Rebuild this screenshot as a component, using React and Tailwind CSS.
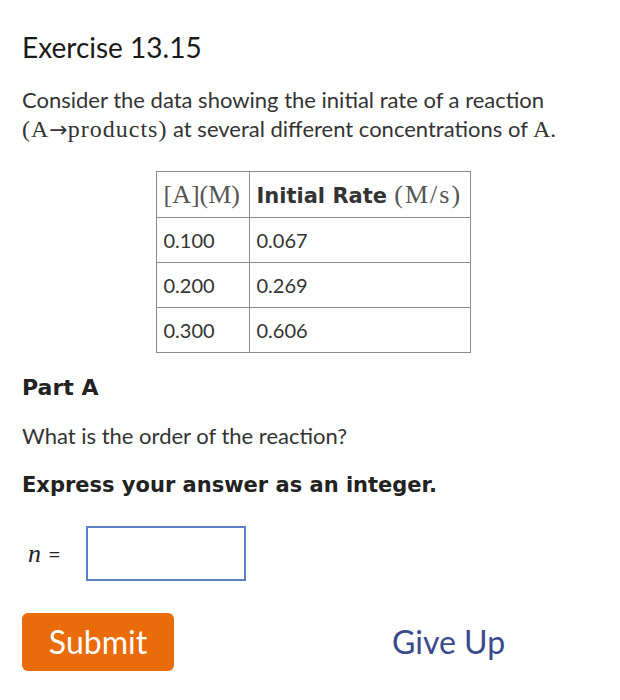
import React from 'react'

// ── Data ──────────────────────────────────────────────────────────────────────

const rows = [
  ['0.100', '0.067'],
  ['0.200', '0.269'],
  ['0.300', '0.606'],
]

const sans  = "font-['Lato','Open_Sans',sans-serif]"
const bold  = "font-['DejaVu_Sans','Open_Sans',sans-serif] font-bold"
const serif = "font-['Liberation_Serif','DejaVu_Serif',serif]"

// ── Page ──────────────────────────────────────────────────────────────────────

export default function App() {
  return (
    <div className={`${sans} bg-white min-h-[700px] w-[620px] px-[22px] pt-[31px] text-[#333]`}>
      <h1 className="text-[28px] leading-[32px] text-[#1a1a1a]">Exercise 13.15</h1>

      <p className="mt-[22px] text-[22px] leading-[29px]">
        Consider the data showing the initial rate of a reaction
        <br />
        <span className={`${serif} text-[24px] tracking-[1px]`}>
          (A<span className="font-['DejaVu_Sans',sans-serif] text-[22px] tracking-normal">→</span>products)
        </span>{' '}
        at several different concentrations of{' '}
        <span className={`${serif} text-[24px]`}>A</span>.
      </p>

      <div className="mt-[27px] flex justify-center pl-[6px]">
        <table className="border-collapse text-[20px]">
          <thead>
            <tr className="h-[46px]">
              <th className={`${serif} w-[93px] border border-[#8c8c8c] px-[7px] text-left text-[26px] font-normal text-[#555]`}>
                [A](M)
              </th>
              <th className={`${bold} w-[221px] border border-[#8c8c8c] px-[7px] text-left text-[21px] text-[#333]`}>
                Initial Rate{' '}
                <span className={`${serif} text-[26px] font-normal tracking-[2px] text-[#555]`}>(M/s)</span>
              </th>
            </tr>
          </thead>
          <tbody>
            {rows.map(([a, r]) => (
              <tr key={a} className="h-[45px]">
                <td className="border border-[#8c8c8c] px-[7px]">{a}</td>
                <td className="border border-[#8c8c8c] px-[7px]">{r}</td>
              </tr>
            ))}
          </tbody>
        </table>
      </div>

      <h2 className={`${bold} mt-[21px] text-[22px] leading-[28px] text-[#222]`}>Part A</h2>

      <p className="mt-[20px] text-[22px] leading-[28px]">What is the order of the reaction?</p>

      <p className={`${bold} mt-[21px] text-[21px] leading-[28px] text-[#222]`}>
        Express your answer as an integer.
      </p>

      <div className="mt-[27px] flex items-center pl-[6px]">
        <span className="flex w-[58px] items-center gap-[7px] text-[#222]">
          <span className={`${serif} text-[26px] italic`}>n</span>
          <span className="text-[22px]">=</span>
        </span>
        <input
          type="text"
          aria-label="n"
          className="h-[55px] w-[160px] border-2 border-[#5b80c6] bg-white outline-none"
        />
      </div>

      <div className="mt-[32px] flex items-center">
        <button
          type="button"
          className="h-[58px] w-[152px] rounded-[6px] bg-[#e96b0a] text-[32px] text-white"
        >
          Submit
        </button>
        <button type="button" className="ml-[218px] text-[32px] text-[#3a4a8c]">
          Give Up
        </button>
      </div>
    </div>
  )
}
